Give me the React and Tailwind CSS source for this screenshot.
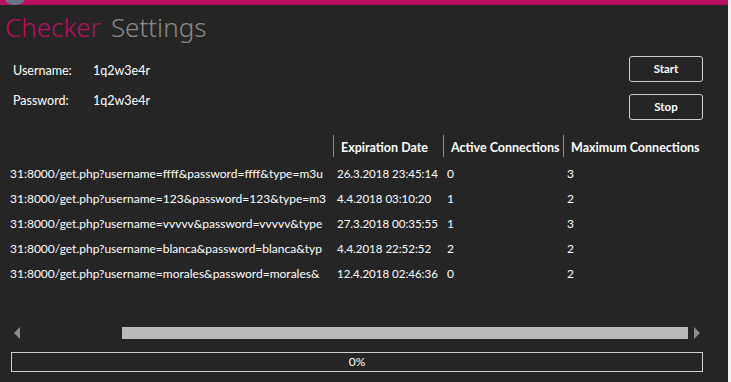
const ROWS = [
  {
    url: "31:8000/get.php?username=ffff&password=ffff&type=m3u",
    exp: "26.3.2018 23:45:14",
    active: "0",
    max: "3",
  },
  {
    url: "31:8000/get.php?username=123&password=123&type=m3",
    exp: "4.4.2018 03:10:20",
    active: "1",
    max: "2",
  },
  {
    url: "31:8000/get.php?username=vvvvv&password=vvvvv&type",
    exp: "27.3.2018 00:35:55",
    active: "1",
    max: "3",
  },
  {
    url: "31:8000/get.php?username=blanca&password=blanca&typ",
    exp: "4.4.2018 22:52:52",
    active: "2",
    max: "2",
  },
  {
    url: "31:8000/get.php?username=morales&password=morales&",
    exp: "12.4.2018 02:46:36",
    active: "0",
    max: "2",
  },
];

const font = { fontFamily: 'Lato, "Noto Sans", sans-serif' };

export default function App() {
  return (
    <div
      className="flex h-[382px] w-[731px] overflow-hidden bg-[#f0f0f0]"
      style={font}
    >
      <div className="relative flex h-full w-[728px] flex-col bg-[#252525] text-white">
        {/* Top accent bar */}
        <div className="relative h-[5px] w-full overflow-hidden bg-[#b80f5f]">
          <div className="absolute left-[4px] top-[-14px] h-[19px] w-[22px] rounded-full bg-[#6b7386]" />
        </div>

        {/* Tabs */}
        <div
          className="flex items-baseline gap-[10px] pl-[5px] pt-[6px] text-[26px] leading-[32px]"
          style={{ fontFamily: '"Noto Sans", sans-serif', fontWeight: 300 }}
        >
          <span className="text-[#b80f5f]">Checker</span>
          <span className="text-[#8a8a8a]">Settings</span>
        </div>

        {/* Credentials + buttons */}
        <div className="flex pl-[13px] pr-[25px] pt-[13px]">
          <div className="flex flex-col gap-[14px] pt-[7px] text-[12.5px] leading-[16px]">
            <div className="flex">
              <span className="w-[80px]">Username:</span>
              <span>1q2w3e4r</span>
            </div>
            <div className="flex">
              <span className="w-[80px]">Password:</span>
              <span>1q2w3e4r</span>
            </div>
          </div>
          <div className="ml-auto flex flex-col gap-[12px]">
            <button className="h-[26px] w-[74px] rounded-[3px] border border-[#cfcfcf] text-[11.5px] font-bold">
              Start
            </button>
            <button className="h-[26px] w-[74px] rounded-[3px] border border-[#cfcfcf] text-[11.5px] font-bold">
              Stop
            </button>
          </div>
        </div>

        {/* Table header */}
        <div className="mt-[15px] flex h-[22px] items-stretch whitespace-nowrap text-[12.5px] font-bold leading-[25px]">
          <div className="w-[333px]" />
          <div className="w-[110px] border-l border-[#8a8a8a] pl-[7px]">
            Expiration Date
          </div>
          <div className="w-[120px] border-l border-[#8a8a8a] pl-[7px]">
            Active Connections
          </div>
          <div className="border-l border-[#8a8a8a] pl-[7px]">
            Maximum Connections
          </div>
        </div>

        {/* Rows */}
        <div className="mt-[4px] flex flex-col text-[12px] leading-[25px]">
          {ROWS.map((r, i) => (
            <div key={i} className="flex h-[25px] whitespace-nowrap">
              <div className="w-[326px] overflow-hidden pl-[10px]">
                {r.url}
              </div>
              <div className="w-[121px] pl-[11px] text-[11.5px]">{r.exp}</div>
              <div className="w-[120px]">{r.active}</div>
              <div>{r.max}</div>
            </div>
          ))}
        </div>

        {/* Horizontal scrollbar */}
        <div className="mt-auto flex h-[14px] items-center pl-[13px] pr-[27px]">
          <svg width="8" height="12" viewBox="0 0 8 12">
            <path d="M7 0 L1 6 L7 12 Z" fill="#8c8c8c" />
          </svg>
          <div className="ml-[101px] h-[12px] flex-1 bg-[#b9b9b9]" />
          <svg width="8" height="12" viewBox="0 0 8 12" className="ml-[5px]">
            <path d="M1 0 L7 6 L1 12 Z" fill="#8c8c8c" />
          </svg>
        </div>

        {/* Progress */}
        <div className="mb-[10px] ml-[11px] mr-[25px] mt-[12px] flex h-[20px] items-center justify-center border border-[#cfcfcf] text-[12px]">
          0%
        </div>
      </div>
    </div>
  );
}
